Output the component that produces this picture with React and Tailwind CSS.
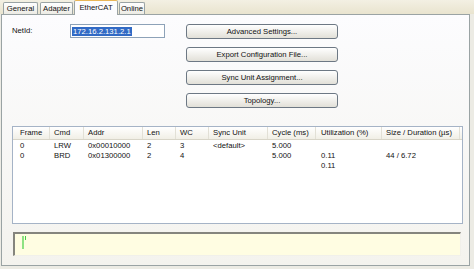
import React from "react";

const cols = [
  { w: "w-[37px]", pl: "pl-[7px]" },
  { w: "w-[34px]", pl: "pl-[4px]" },
  { w: "w-[59px]", pl: "pl-[4px]" },
  { w: "w-[33px]", pl: "pl-[4px]" },
  { w: "w-[33px]", pl: "pl-[4px]" },
  { w: "w-[59px]", pl: "pl-[4px]" },
  { w: "w-[48px]", pl: "pl-[4px]" },
  { w: "w-[66px]", pl: "pl-[5px]" },
  { w: "w-[78px]", pl: "pl-[4px]" },
];

const headers = ["Frame", "Cmd", "Addr", "Len", "WC", "Sync Unit", "Cycle (ms)", "Utilization (%)", "Size / Duration (µs)"];
const rows = [
  ["0", "LRW", "0x00010000", "2", "3", "<default>", "5.000", "", ""],
  ["0", "BRD", "0x01300000", "2", "4", "", "5.000", "0.11", "44 / 6.72"],
  ["", "", "", "", "", "", "", "0.11", ""],
];

function Btn({ children }) {
  return (
    <div className="w-[152px] h-[15px] rounded-[3px] border border-[#6d7884] bg-linear-to-b from-white to-[#e2e0d8] flex items-center justify-center leading-none text-[#111]">
      {children}
    </div>
  );
}

export default function App() {
  return (
    <div
      className="w-[474px] h-[269px] bg-[#ecebe4] text-[7.7px] text-[#111] overflow-hidden"
      style={{ fontFamily: '"Liberation Sans", Arial, sans-serif' }}
    >
      {/* tab strip */}
      <div className="h-[14px] flex items-end pl-[3px] gap-[1px] bg-linear-to-b from-[#f3f0e3] to-[#e9e4cf]">
        <div className="w-[35px] h-[12px] border border-b-0 border-[#9aa3a4] rounded-t-[2px] bg-linear-to-b from-white to-[#ecebe4] flex items-center justify-center leading-none">General</div>
        <div className="w-[33px] h-[12px] border border-b-0 border-[#9aa3a4] rounded-t-[2px] bg-linear-to-b from-white to-[#ecebe4] flex items-center justify-center leading-none ml-[1px]">Adapter</div>
        <div className="relative z-10 w-[44px] h-[15px] -mb-[1px] border border-b-0 border-[#9aa3a4] border-t-[#e8b658] rounded-t-[2px] bg-[#fcfcfe] flex items-center justify-center leading-none">EtherCAT</div>
        <div className="w-[26px] h-[12px] border border-b-0 border-[#9aa3a4] rounded-t-[2px] bg-linear-to-b from-white to-[#ecebe4] flex items-center justify-center leading-none">Online</div>
      </div>

      {/* panel */}
      <div className="ml-[1px] w-[469px] h-[252px] border border-[#9aa3a4] bg-linear-to-b from-[#fcfcfe] to-[#f4f3ee] flex flex-col">
        {/* top */}
        <div className="flex pt-[9px] h-[93px]">
          <div className="flex items-start w-[184px]">
            <div className="w-[68px] pl-[10px] h-[14px] flex items-center leading-none">NetId:</div>
            <div className="w-[95px] h-[14px] border border-[#8da2b8] bg-white flex items-center pl-[1px]">
              <span className="bg-[#316ac5] text-white leading-[9px] px-[1px]">172.16.2.131.2.1</span>
            </div>
          </div>
          <div className="flex flex-col gap-[8px]">
            <Btn>Advanced Settings...</Btn>
            <Btn>Export Configuration File...</Btn>
            <Btn>Sync Unit Assignment...</Btn>
            <Btn>Topology...</Btn>
          </div>
        </div>

        {/* table */}
        <div className="ml-[10px] mt-[18px] w-[451px] h-[98px] border border-[#a5b3c6] bg-white">
          <div className="flex h-[13px] border-b border-[#d8d5c8] bg-linear-to-b from-white to-[#f1efe6]">
            {headers.map((h, i) => (
              <div key={i} className={`${cols[i].w} ${cols[i].pl} flex items-center leading-none whitespace-nowrap border-r border-[#e2e0d6]`}>
                {h}
              </div>
            ))}
          </div>
          <div className="pt-[1px]">
            {rows.map((r, ri) => (
              <div key={ri} className="flex h-[10px]">
                {r.map((c, ci) => (
                  <div key={ci} className={`${cols[ci].w} ${cols[ci].pl} leading-[10px] whitespace-nowrap`}>
                    {c}
                  </div>
                ))}
              </div>
            ))}
          </div>
        </div>

        {/* log box */}
        <div className="ml-[11px] mt-[8px] w-[448px] h-[24px] border-t-2 border-l-2 border-[#85857e] border-r border-b border-r-[#f1f0ea] border-b-[#f1f0ea] bg-[#fffde2] pl-[7px] pt-[2px]">
          <svg width="6" height="13" viewBox="0 0 6 13">
            <line x1="1" y1="0" x2="1" y2="13" stroke="#44d044" strokeWidth="1.2" />
            <line x1="3.5" y1="0" x2="3.5" y2="4" stroke="#44d044" strokeWidth="1" />
          </svg>
        </div>
      </div>
    </div>
  );
}
